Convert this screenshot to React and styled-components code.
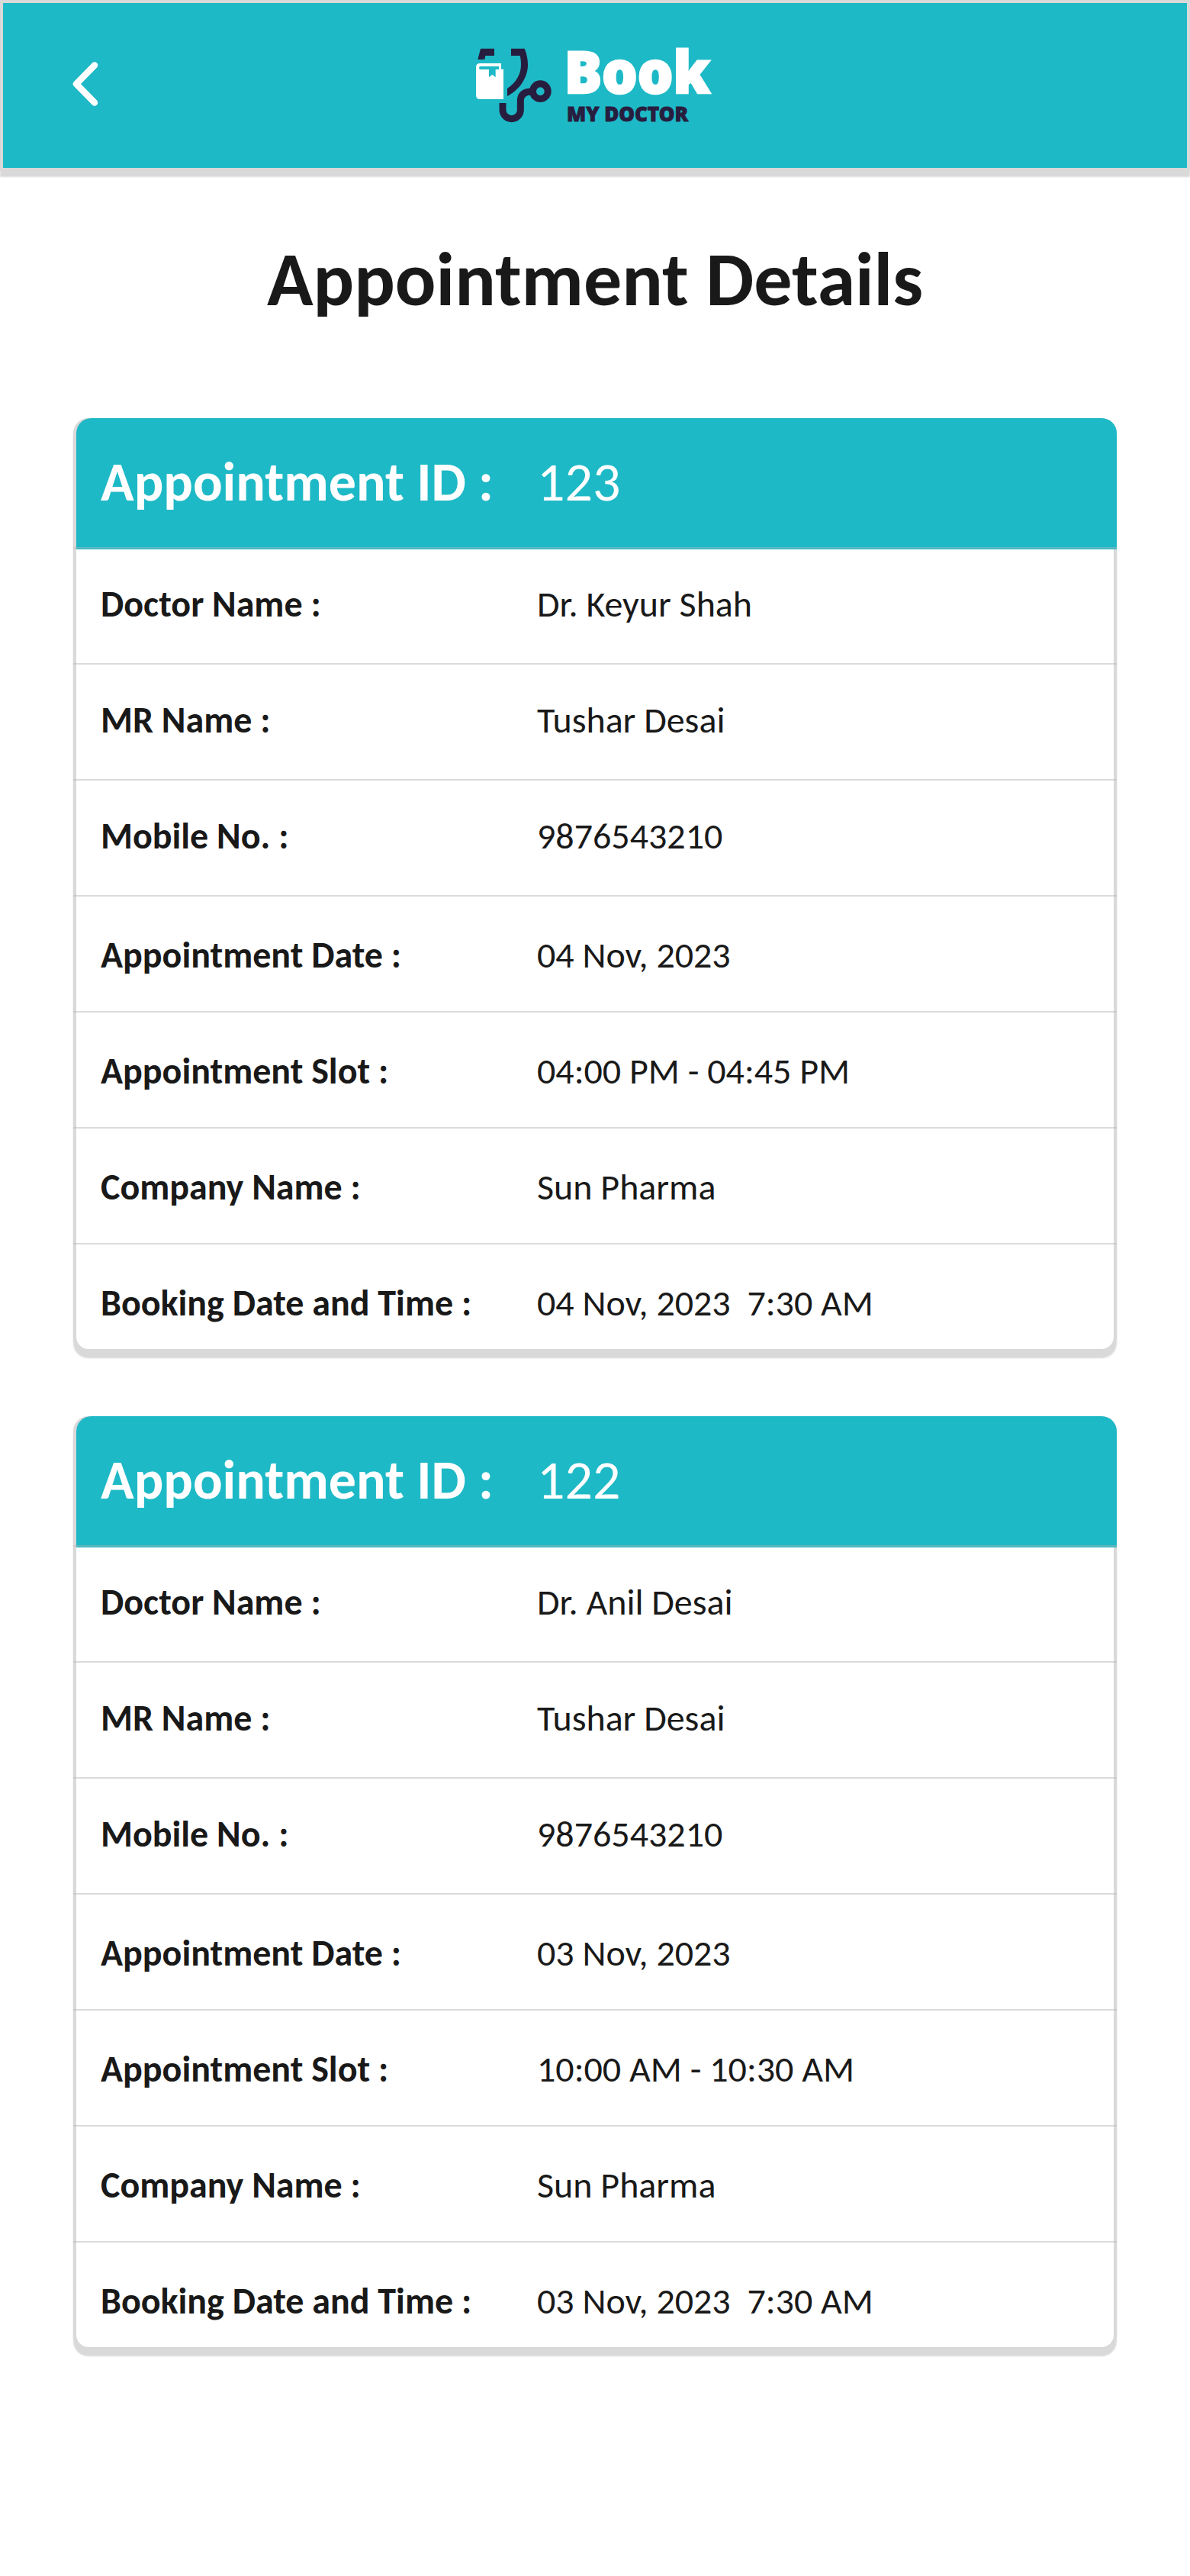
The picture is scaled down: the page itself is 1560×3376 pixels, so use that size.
import React from "react";
import styled, { createGlobalStyle } from "styled-components";

const appointments = [
  {
    id: "123",
    doctor: "Dr. Keyur Shah",
    mr: "Tushar Desai",
    mobile: "9876543210",
    date: "04 Nov, 2023",
    slot: "04:00 PM - 04:45 PM",
    company: "Sun Pharma",
    booking: "04 Nov, 2023  7:30 AM",
  },
  {
    id: "122",
    doctor: "Dr. Anil Desai",
    mr: "Tushar Desai",
    mobile: "9876543210",
    date: "03 Nov, 2023",
    slot: "10:00 AM - 10:30 AM",
    company: "Sun Pharma",
    booking: "03 Nov, 2023  7:30 AM",
  },
];

function Logo() {
  return (
    <LogoSvg width="360" height="140" viewBox="0 0 1080 420">
      {/* stethoscope */}
      <g fill="#271e3f">
        <path d="M90 71H144V99H109L106 114H79Z" />
        <path d="M210 71H263C272 92 276 114 276 135C276 185 243 234 195 258V228C229 206 249 172 249 135C249 122 248 111 245 99H210Z" />
      </g>
      <g fill="none" stroke="#271e3f" strokeWidth="27">
        <path d="M177 285V313A35 34 0 0 0 247 313V276C247 252 262 240 290 240" />
        <circle cx="325" cy="239" r="29.5" />
      </g>
      {/* book */}
      <path fill="#ffffff" d="M88 129H171V152H180V270H88Q72 270 72 254V145Q72 129 88 129Z" />
      <path fill="#1eb9c6" d="M90 141H162V153H149V184L136 173L123 184V153H90Q84 153 84 147Q84 141 90 141Z" />
      <BookText x="419" y="247" textLength="574" lengthAdjust="spacingAndGlyphs">Book</BookText>
      <DoctorText x="429" y="357" textLength="477" lengthAdjust="spacingAndGlyphs">MY DOCTOR</DoctorText>
    </LogoSvg>
  );
}

function AppointmentCard({ data }) {
  return (
    <Card>
      <CardHeader>
        <Label>Appointment ID :</Label>
        <Value>{data.id}</Value>
      </CardHeader>
      <Rows>
        <Row><Label>Doctor Name :</Label><Value>{data.doctor}</Value></Row>
        <Row><Label>MR Name :</Label><Value>{data.mr}</Value></Row>
        <Row><Label>Mobile No. :</Label><Value>{data.mobile}</Value></Row>
        <Row $low><Label>Appointment Date :</Label><Value>{data.date}</Value></Row>
        <Row $low><Label>Appointment Slot :</Label><Value>{data.slot}</Value></Row>
        <Row $low><Label>Company Name :</Label><Value>{data.company}</Value></Row>
        <Row $low><Label>Booking Date and Time :</Label><Value>{data.booking}</Value></Row>
      </Rows>
    </Card>
  );
}

function App() {
  return (
    <Container>
      <GlobalStyle />
      <Header>
        <BackButton aria-label="Back">
          <svg width="40" height="64" viewBox="0 0 40 64">
            <path d="M32 7.5L8 32L32 56.5" fill="none" stroke="#ffffff" strokeWidth="8.5" strokeLinecap="round" strokeLinejoin="round" />
          </svg>
        </BackButton>
        <Logo />
      </Header>
      <Title>Appointment Details</Title>
      <CardList>
        {appointments.map((item) => (
          <AppointmentCard key={item.id} data={item} />
        ))}
      </CardList>
    </Container>
  );
}

const GlobalStyle = createGlobalStyle`
  * {
    box-sizing: border-box;
  }
  body {
    margin: 0;
    background-color: #ffffff;
  }
`;

const Container = styled.div`
  width: 1560px;
  min-height: 3376px;
  background-color: #ffffff;
  font-family: Carlito, Calibri, Lato, sans-serif;
  color: #191919;
`;

const Header = styled.header`
  display: grid;
  grid-template-columns: 1fr 360px 1fr;
  align-items: center;
  height: 224px;
  padding-bottom: 4px;
  background-color: #1eb9c6;
  border: 4px solid #d9d9d9;
  box-shadow: 0 8px 2px #d9d9d9;
`;

const BackButton = styled.button`
  display: flex;
  width: 40px;
  margin-left: 88px;
  padding: 0;
  border: none;
  background: none;
`;

const LogoSvg = styled.svg`
  display: block;
  overflow: visible;
`;

const BookText = styled.text`
  font-family: "Noto Sans", sans-serif;
  font-size: 228px;
  font-weight: 900;
  fill: #ffffff;
  stroke: #ffffff;
  stroke-width: 8px;
`;

const DoctorText = styled.text`
  font-family: "Noto Sans", sans-serif;
  font-size: 78px;
  font-weight: 900;
  fill: #271e3f;
  stroke: #271e3f;
  stroke-width: 3px;
`;

const Title = styled.h1`
  margin: 81px 0 121px;
  font-size: 100px;
  line-height: 122px;
  font-weight: 700;
  text-align: center;
`;

const CardList = styled.main`
  display: flex;
  flex-direction: column;
  gap: 84px;
  padding: 0 96px;
`;

const Card = styled.section`
  height: 1224px;
  background-color: #ffffff;
  border: 4px solid #d9d9d9;
  border-radius: 20px;
  box-shadow: 0 8px 2px #d9d9d9;
`;

const Label = styled.span`
  width: 572px;
  font-weight: 700;
`;

const Value = styled.span`
  white-space: pre;
`;

const CardHeader = styled.div`
  display: flex;
  height: 172px;
  margin: -4px -4px 0 0;
  padding: 39px 0 0 32px;
  font-size: 72px;
  line-height: 88px;
  color: #ffffff;
  background-color: #1eb9c6;
  border-radius: 20px 20px 0 0;
`;

const Rows = styled.div`
  margin: -3px -4px 0;
`;

const Row = styled.div`
  display: flex;
  height: 152px;
  padding: ${(p) => (p.$low ? 47 : 43)}px 0 0 36px;
  font-size: 48px;
  line-height: 60px;
  border-top: 2px solid rgba(180, 180, 180, 0.48);
`;

export default App;
